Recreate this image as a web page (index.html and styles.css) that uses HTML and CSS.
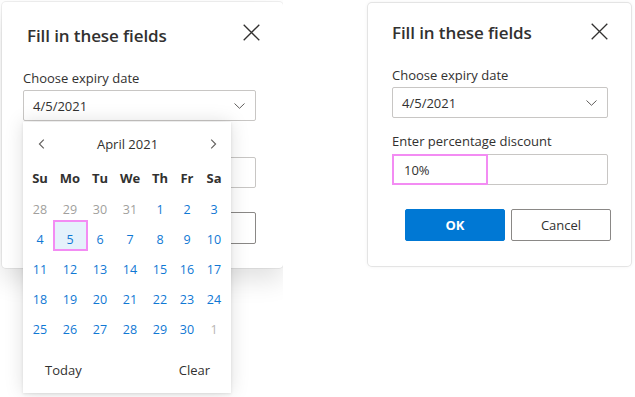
FILE: index.html
```html
<!DOCTYPE html>
<html lang="en">
<head>
<meta charset="utf-8">
<title>Fill in these fields</title>
<link rel="stylesheet" href="styles.css">
</head>
<body>
<div class="stage">
  <div class="shot shot-left">
    <div class="dialog dialog-left">
      <div class="dlg-head">
        <h2 class="dlg-title">Fill in these fields</h2>
        <svg class="close" width="17" height="17" viewBox="0 0 17 17"><path d="M0.7 0.7 L16.3 16.3 M16.3 0.7 L0.7 16.3" stroke="#323130" stroke-width="1.3" fill="none"/></svg>
      </div>
      <div class="field-label label-first">Choose expiry date</div>
      <div class="dropdown-wrap">
        <div class="input select">
          <span>4/5/2021</span>
          <svg class="chev" width="11" height="6" viewBox="0 0 11 6"><path d="M0.5 0.5 L5.5 5.3 L10.5 0.5" stroke="#605e5c" stroke-width="1" fill="none"/></svg>
        </div>
        <div class="calendar">
          <div class="cal-head">
            <svg class="nav" width="7" height="10" viewBox="0 0 7 10"><path d="M5.8 0.6 L1.4 5 L5.8 9.4" stroke="#605e5c" stroke-width="1.1" fill="none"/></svg>
            <span class="cal-month">April 2021</span>
            <svg class="nav" width="7" height="10" viewBox="0 0 7 10"><path d="M1.2 0.6 L5.6 5 L1.2 9.4" stroke="#605e5c" stroke-width="1.1" fill="none"/></svg>
          </div>
          <div class="cal-grid cal-week">
            <span>Su</span><span>Mo</span><span>Tu</span><span>We</span><span>Th</span><span>Fr</span><span>Sa</span>
          </div>
          <div class="cal-grid cal-days">
            <span class="out">28</span><span class="out">29</span><span class="out">30</span><span class="out">31</span><span>1</span><span>2</span><span>3</span>
            <span>4</span><span class="sel">5</span><span>6</span><span>7</span><span>8</span><span>9</span><span>10</span>
            <span>11</span><span>12</span><span>13</span><span>14</span><span>15</span><span>16</span><span>17</span>
            <span>18</span><span>19</span><span>20</span><span>21</span><span>22</span><span>23</span><span>24</span>
            <span>25</span><span>26</span><span>27</span><span>28</span><span>29</span><span>30</span><span class="out faint">1</span>
          </div>
          <div class="cal-foot">
            <span>Today</span>
            <span>Clear</span>
          </div>
        </div>
      </div>
      <div class="field-label label-second"><span class="obscured">Enter percentage discount</span></div>
      <div class="input text-input"><span class="value-box"><span class="obscured">10%</span></span></div>
      <div class="actions">
        <button class="btn btn-primary"><span class="obscured">OK</span></button>
        <button class="btn btn-default"><span class="obscured">Cancel</span></button>
      </div>
    </div>
  </div>

  <div class="shot shot-right">
    <div class="dialog dialog-right">
      <div class="dlg-head">
        <h2 class="dlg-title">Fill in these fields</h2>
        <svg class="close" width="17" height="17" viewBox="0 0 17 17"><path d="M0.7 0.7 L16.3 16.3 M16.3 0.7 L0.7 16.3" stroke="#323130" stroke-width="1.3" fill="none"/></svg>
      </div>
      <div class="field-label label-first">Choose expiry date</div>
      <div class="input select">
        <span>4/5/2021</span>
        <svg class="chev" width="11" height="6" viewBox="0 0 11 6"><path d="M0.5 0.5 L5.5 5.3 L10.5 0.5" stroke="#605e5c" stroke-width="1" fill="none"/></svg>
      </div>
      <div class="field-label label-second">Enter percentage discount</div>
      <div class="input text-input"><span class="value-box">10%</span></div>
      <div class="actions">
        <button class="btn btn-primary">OK</button>
        <button class="btn btn-default">Cancel</button>
      </div>
    </div>
  </div>
</div>
</body>
</html>
```

FILE: styles.css
```css
html, body {
  margin: 0;
  padding: 0;
  background: #ffffff;
}

body {
  font-family: "Open Sans", "Noto Sans", Arial, sans-serif;
  color: #323130;
}

.stage {
  display: flex;
  width: 635px;
  height: 397px;
  overflow: hidden;
}

.shot {
  flex: none;
  box-sizing: border-box;
}

.shot-left {
  width: 283px;
  height: 397px;
  overflow: hidden;
  padding: 2px 0 0 2px;
}

.shot-right {
  margin-left: 85px;
  padding-top: 3px;
}

.dialog {
  background: #ffffff;
  border-radius: 4px;
  box-sizing: border-box;
  display: flex;
  flex-direction: column;
}

.dialog-left {
  width: 281px;
  height: 266px;
  padding: 22px 27px 0 21px;
  box-shadow: 0 0 0 1px rgba(0, 0, 0, 0.06), 0 12px 26px rgba(0, 0, 0, 0.12);
}

.dialog-right {
  width: 263px;
  height: 263px;
  padding: 18px 23px 0 24px;
  box-shadow: 0 0 0 1px #e4e4e4, 0 0 4px rgba(0, 0, 0, 0.08);
}

.dlg-head {
  display: flex;
  justify-content: space-between;
  align-items: flex-start;
}

.dlg-title {
  margin: 0;
  font-size: 17px;
  line-height: 24px;
  font-weight: 600;
  color: #323130;
  letter-spacing: -0.1px;
}

.dialog-left .dlg-title {
  margin-left: 4px;
}

.close {
  display: block;
}

.dialog-left .close {
  margin-right: -4px;
}

.dialog-right .close {
  margin: 2px 0 0 0;
}

.field-label {
  font-size: 13px;
  line-height: 20px;
  height: 20px;
  color: #323130;
}

.label-first {
  margin-top: 20px;
}

.label-second {
  margin-top: 13px;
}

.obscured {
  visibility: hidden;
}

.input {
  box-sizing: border-box;
  height: 31px;
  border: 1px solid #c8c6c4;
  border-radius: 2px;
  font-size: 13px;
  color: #323130;
  display: flex;
  align-items: center;
}

.select {
  margin-top: 2px;
  justify-content: space-between;
  padding: 0 10px 0 9px;
}

.dropdown-wrap {
  position: relative;
}

.text-input {
  margin-top: 3px;
  padding: 0;
  position: relative;
}

.value-box {
  box-sizing: border-box;
  height: 31px;
  width: 96px;
  margin: -1px 0 -1px -1px;
  border: 2px solid #f38cf3;
  padding-left: 10px;
  display: flex;
  align-items: center;
}

.actions {
  display: flex;
  justify-content: flex-end;
  gap: 6px;
  margin-top: 24px;
}

.dialog-right .actions {
  margin-right: -3px;
}

.btn {
  box-sizing: border-box;
  width: 100px;
  height: 32px;
  border-radius: 2px;
  font-family: inherit;
  font-size: 13px;
  padding: 0;
}

.btn-primary {
  background: #0078d4;
  border: 1px solid #0078d4;
  color: #ffffff;
  font-weight: 700;
}

.btn-default {
  background: #ffffff;
  border: 1px solid #8a8886;
  color: #323130;
  font-weight: 400;
}

/* Calendar popup */
.calendar {
  position: absolute;
  left: 0;
  top: calc(100% + 1px);
  width: 208px;
  height: 271px;
  box-sizing: border-box;
  background: #ffffff;
  box-shadow: 0 0 18px rgba(0, 0, 0, 0.13), 0 1px 3px rgba(0, 0, 0, 0.1);
  padding: 12px 0 0 2px;
  z-index: 2;
}

.cal-head {
  display: flex;
  justify-content: space-between;
  align-items: center;
  height: 20px;
  padding: 0 14px 0 13px;
  font-size: 13px;
}

.nav {
  display: block;
}

.cal-month {
  color: #323130;
}

.cal-grid {
  display: grid;
  grid-template-columns: 30px 30px 30px 30px 30px 24px 30px;
  grid-auto-rows: 30px;
  text-align: center;
}

.cal-grid span {
  display: flex;
  align-items: center;
  justify-content: center;
  position: relative;
}

.cal-week {
  margin-top: 9px;
  font-size: 13px;
  font-weight: 700;
  color: #323130;
}

.cal-days {
  margin-top: 1px;
  font-size: 12.5px;
  color: #0f78d4;
}

.cal-days .out {
  color: #a19f9d;
}

.cal-days .faint {
  color: #b8b6b4;
}

.cal-days .sel {
  z-index: 0;
}

.cal-days .sel::before {
  content: "";
  position: absolute;
  left: -2px;
  top: -4px;
  width: 35px;
  height: 31px;
  box-sizing: border-box;
  background: #e5f1fb;
  border: 2px solid #f38cf3;
  z-index: -1;
}

.cal-foot {
  display: flex;
  justify-content: space-between;
  align-items: center;
  height: 30px;
  margin-top: 11px;
  padding: 0 21px 0 20px;
  font-size: 13px;
  color: #323130;
}
```
